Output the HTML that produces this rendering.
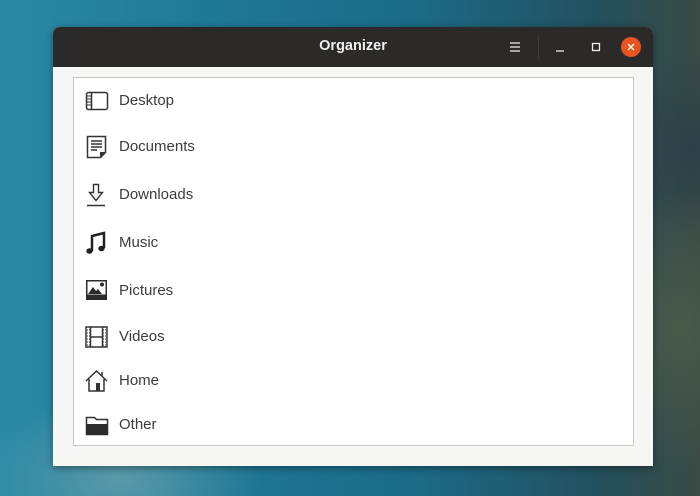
<!DOCTYPE html>
<html><head><style>
body{margin:0;width:700px;height:496px;overflow:hidden;position:relative;font-family:"Liberation Sans","DejaVu Sans",sans-serif;
background:
radial-gradient(ellipse 120px 200px at 680px 330px,#4a5a4a 0%,transparent 70%),
radial-gradient(ellipse 90px 140px at 690px 150px,#2d4048 0%,transparent 70%),
radial-gradient(ellipse 200px 120px at 120px 480px,#5a9aa8 0%,transparent 70%),
linear-gradient(90deg,#2a8aa6 0%,#1f7896 30%,#1c6a86 60%,#23505e 85%,#3a4a44 100%);}
.win{position:absolute;left:53px;top:27px;width:600px;height:439px;background:#f6f6f5;border-radius:7px 7px 0 0;overflow:hidden;box-shadow:0 2px 8px rgba(0,0,0,.4)}
.tb{height:40px;background:#2c2a29;position:relative;color:#f0f0f0}
.title{position:absolute;left:0;right:0;top:11px;text-align:center;font-size:14.5px;font-weight:bold}
.list{position:absolute;left:20px;top:50px;width:559px;height:367px;background:#fff;border:1px solid #c6c6c4}
.row{position:absolute;left:11px;height:24px;font-size:15px;color:#3c3c3c}
.row svg{position:absolute;left:0;top:0}
.row span{position:absolute;left:34px;top:3px}
</style></head><body>
<div class="win">
<div class="tb"><div class="title">Organizer</div>
<svg style="position:absolute;left:455px;top:13px" width="14" height="14"><path d="M2 3h10M2 7h10M2 11h10" stroke="#eee" stroke-width="1.3"/></svg>
<div style="position:absolute;left:485px;top:9px;width:1px;height:23px;background:#3e3c3b"></div>
<svg style="position:absolute;left:500px;top:13px" width="14" height="14"><path d="M3 11h8" stroke="#eee" stroke-width="1.3"/></svg>
<svg style="position:absolute;left:536px;top:13px" width="14" height="14"><rect x="3.5" y="3.5" width="7" height="7" fill="none" stroke="#eee" stroke-width="1.3"/></svg>
<div style="position:absolute;left:568px;top:10px;width:20px;height:20px;border-radius:50%;background:#e95420"></div>
<svg style="position:absolute;left:571px;top:13px" width="14" height="14"><path d="M4 4l6 6M10 4l-6 6" stroke="#fff" stroke-width="1.4"/></svg>
</div>
<div class="list">
<div class="row" style="top:11px"><svg width="24" height="24"><rect x="1.5" y="3.5" width="21" height="17" rx="2" fill="none" stroke="#333" stroke-width="1.5"/><path d="M6.5 4v16" stroke="#333" stroke-width="1.5"/><path d="M2 7h4M2 10h4M2 13h4M2 16h4" stroke="#333"/></svg><span>Desktop</span></div>
<div class="row" style="top:57px"><svg width="24" height="24"><path d="M2.5 1.5h18v16l-5 5h-13z" fill="none" stroke="#333" stroke-width="1.5"/><path d="M15 22l0-5h5.5z" fill="#333"/><path d="M6 6h11M6 9h11M6 12h11M6 15h6" stroke="#333" stroke-width="1.4"/></svg><span>Documents</span></div>
<div class="row" style="top:105px"><svg width="24" height="24"><path d="M8.5 1.5h5v8h4l-6.5 8-6.5-8h4z" fill="none" stroke="#333" stroke-width="1.4"/><path d="M2 22.5h18" stroke="#333" stroke-width="1.4"/></svg><span>Downloads</span></div>
<div class="row" style="top:153px"><svg width="24" height="24"><path d="M7 20V5l12-3v15" fill="none" stroke="#222" stroke-width="2.5"/><ellipse cx="4.5" cy="20" rx="3.2" ry="2.8" fill="#222"/><ellipse cx="16.5" cy="17.5" rx="3.2" ry="2.8" fill="#222"/></svg><span>Music</span></div>
<div class="row" style="top:201px"><svg width="24" height="24"><rect x="1" y="1" width="21" height="20" fill="#2b2b2b"/><rect x="2.5" y="2.5" width="18" height="13" fill="#fff"/><path d="M3 15l5-7 3 4 2-2 4 5z" fill="#2b2b2b"/><circle cx="17" cy="5.5" r="2" fill="#2b2b2b"/></svg><span>Pictures</span></div>
<div class="row" style="top:247px"><svg width="24" height="24"><rect x="1" y="2" width="21" height="20" fill="none" stroke="#333" stroke-width="1.5"/><path d="M5.5 2v20M17.5 2v20M5.5 12h12" stroke="#333" stroke-width="1.5"/><path d="M2 5h3M2 8h3M2 11h3M2 14h3M2 17h3M2 20h3M18 5h3M18 8h3M18 11h3M18 14h3M18 17h3M18 20h3" stroke="#333" stroke-dasharray="1 1"/></svg><span>Videos</span></div>
<div class="row" style="top:291px"><svg width="24" height="24"><path d="M1 12L11.5 2 22 12" fill="none" stroke="#333" stroke-width="1.5"/><path d="M4 10v12h15V10" fill="none" stroke="#333" stroke-width="1.5"/><rect x="11" y="14" width="4" height="8" fill="#333"/><path d="M17 3v4" stroke="#333" stroke-width="1.5"/></svg><span>Home</span></div>
<div class="row" style="top:335px"><svg width="24" height="24"><path d="M1.5 4.5h8l2 2h11v15h-21z" fill="none" stroke="#333" stroke-width="1.5"/><path d="M1 11h22v11H1z" fill="#2b2b2b"/></svg><span>Other</span></div>
</div>
</div>
</body></html>
